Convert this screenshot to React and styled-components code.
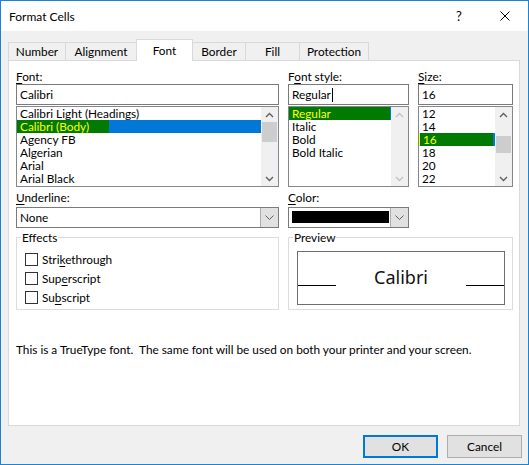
import React from "react";
import styled, { createGlobalStyle } from "styled-components";

const Global = createGlobalStyle`
  html, body { margin: 0; padding: 0; background: #ffffff; }
  body {
    font-family: Lato, "Noto Sans", sans-serif;
    font-size: 11.8px;
    color: #000;
  }
  * { box-sizing: border-box; }
`;

const Window = styled.div`
  width: 529px;
  height: 465px;
  border: 1px solid #1883d7;
  background: #f0f0f0;
  display: flex;
  flex-direction: column;
`;

const TitleBar = styled.div`
  height: 30px;
  flex: none;
  background: #fff;
  display: flex;
  align-items: center;
  padding-left: 8px;
`;

const Title = styled.div`
  flex: 1;
  line-height: 15px;
  font-size: 12px;
`;

const CaptionButton = styled.div`
  width: 46px;
  height: 30px;
  display: flex;
  align-items: center;
  justify-content: center;
  font-size: 13px;
`;

const Body = styled.div`
  flex: 1;
  display: flex;
  flex-direction: column;
  padding: 8px 6px 6px 7px;
`;

const TabStrip = styled.div`
  display: flex;
  align-items: flex-end;
  height: 21px;
`;

const Tab = styled.div`
  width: ${(p) => p.$w}px;
  height: ${(p) => (p.$active ? 22 : 18)}px;
  margin-right: -1px;
  margin-bottom: ${(p) => (p.$active ? -1 : 0)}px;
  border: 1px solid #d9d9d9;
  border-bottom: none;
  background: ${(p) => (p.$active ? "#fff" : "#f0f0f0")};
  position: relative;
  z-index: ${(p) => (p.$active ? 2 : 0)};
  display: flex;
  align-items: center;
  justify-content: center;
  line-height: 15px;
`;

const Panel = styled.div`
  height: 366px;
  margin-right: 2px;
  background: #fff;
  border: 1px solid #d9d9d9;
  padding: 8px 6px 0 7px;
  position: relative;
  z-index: 1;
`;

const TopGrid = styled.div`
  display: grid;
  grid-template-columns: 263px 121px 95px;
  column-gap: 9px;
`;

const MidGrid = styled.div`
  display: grid;
  grid-template-columns: 263px 121px;
  column-gap: 9px;
  margin-top: 3px;
`;

const Field = styled.div`
  display: flex;
  flex-direction: column;
`;

const Label = styled.div`
  height: 15px;
  line-height: 15px;
  margin-bottom: ${(p) => p.$gap || 0}px;
  white-space: nowrap;
`;

const Key = styled.span`
  text-decoration: underline;
  text-underline-offset: 2px;
`;

const TextBox = styled.div`
  height: 21px;
  border: 1px solid #7a7a7a;
  padding: 0 3px;
  display: flex;
  align-items: center;
  line-height: 15px;
  background: #fff;
`;

const Caret = styled.span`
  display: inline-block;
  width: 1px;
  height: 14px;
  background: #000;
  margin-left: 1px;
`;

const ListBox = styled.div`
  margin-top: 1px;
  height: 81px;
  border: 1px solid #828790;
  display: flex;
  background: #fff;
`;

const Items = styled.div`
  flex: 1;
  overflow: hidden;
`;

const Item = styled.div`
  height: 13px;
  line-height: 13px;
  padding-left: 3px;
  white-space: nowrap;
  background: ${(p) => p.$bg || "transparent"};
  color: ${(p) => p.$fg || "#000"};
  border-left: ${(p) => (p.$edgeLeft ? `1px solid ${p.$edgeLeft}` : "none")};
  border-right: ${(p) => (p.$edgeRight ? `${p.$edgeRight}px solid #0078d7` : "none")};
`;

const Mark = styled.div`
  width: 92px;
  height: 13px;
  margin-left: -3px;
  padding-left: 3px;
  background: #007a00;
  color: #ffff00;
`;

const ScrollBar = styled.div`
  width: 17px;
  flex: none;
  background: #f0f0f0;
  display: flex;
  flex-direction: column;
`;

const ArrowButton = styled.div`
  height: 15px;
  flex: none;
  display: flex;
  align-items: center;
  justify-content: center;
  color: ${(p) => (p.$disabled ? "#c2c2c2" : "#606060")};
`;

const Track = styled.div`
  flex: 1;
`;

const Thumb = styled.div`
  margin: ${(p) => p.$top}px 1px 0;
  height: ${(p) => p.$h}px;
  background: #cdcdcd;
`;

const ComboBox = styled.div`
  height: 21px;
  border: 1px solid #7a7a7a;
  display: flex;
  background: #fff;
`;

const ComboValue = styled.div`
  flex: 1;
  padding: 0 3px;
  display: flex;
  align-items: center;
  line-height: 15px;
`;

const Swatch = styled.div`
  flex: 1;
  margin: 3px 1px 4px 3px;
  background: #000;
`;

const DropButton = styled.div`
  width: 18px;
  flex: none;
  background: #e1e1e1;
  border-left: 1px solid #acacac;
  display: flex;
  align-items: center;
  justify-content: center;
  color: #606060;
`;

const GroupGrid = styled.div`
  display: grid;
  grid-template-columns: 263px 225px;
  column-gap: 9px;
  margin-top: 2px;
`;

const Group = styled.fieldset`
  margin: 0;
  padding: 0;
  min-width: 0;
  border: 1px solid #dcdcdc;
`;

const Legend = styled.legend`
  margin-left: 4px;
  padding: 0 1px;
  line-height: 15px;
  font-size: 11.8px;
`;

const CheckList = styled.div`
  padding: 5px 0 2px 8px;
  display: flex;
  flex-direction: column;
`;

const CheckRow = styled.div`
  height: 19px;
  display: flex;
  align-items: center;
  gap: 4px;
  line-height: 15px;
`;

const CheckBox = styled.span`
  width: 13px;
  height: 13px;
  border: 1px solid #333;
  background: #fff;
  flex: none;
`;

const PreviewBox = styled.div`
  height: 54px;
  margin: 6px 7px 0 8px;
  border: 1px solid #6e6e6e;
  display: flex;
  padding-top: 13px;
`;

const PreviewRule = styled.div`
  flex: 1;
  height: 1px;
  margin-top: 20px;
  background: #000;
`;

const PreviewText = styled.div`
  margin: 0 38px;
  font-family: "Noto Sans", sans-serif;
  font-size: 18px;
  line-height: 24px;
  color: #111;
`;

const Info = styled.div`
  margin-top: 32px;
  line-height: 15px;
  white-space: pre;
`;

const ButtonRow = styled.div`
  margin-top: 9px;
  display: flex;
  justify-content: flex-end;
  gap: 9px;
`;

const Button = styled.div`
  width: 75px;
  height: 23px;
  background: #e1e1e1;
  border: ${(p) => (p.$default ? "2px solid #0078d7" : "1px solid #adadad")};
  display: flex;
  align-items: center;
  justify-content: center;
  line-height: 15px;
`;

const ChevronUp = () => (
  <svg width="9" height="6" viewBox="0 0 9 6">
    <polyline points="1,5 4.5,1.5 8,5" fill="none" stroke="currentColor" strokeWidth="1.4" />
  </svg>
);

const ChevronDown = () => (
  <svg width="9" height="6" viewBox="0 0 9 6">
    <polyline points="1,1 4.5,4.5 8,1" fill="none" stroke="currentColor" strokeWidth="1.4" />
  </svg>
);

const ThinChevron = () => (
  <svg width="9" height="5" viewBox="0 0 9 5">
    <polyline points="0.5,0.5 4.5,4.5 8.5,0.5" fill="none" stroke="currentColor" strokeWidth="1" />
  </svg>
);

const CloseGlyph = () => (
  <svg width="10" height="10" viewBox="0 0 10 10">
    <path d="M0.5 0.5 L9.5 9.5 M9.5 0.5 L0.5 9.5" stroke="#000" strokeWidth="1" />
  </svg>
);

const Scroll = ({ disabled, thumbTop, thumbHeight }) => (
  <ScrollBar>
    <ArrowButton $disabled={disabled}>
      <ChevronUp />
    </ArrowButton>
    <Track>{!disabled && <Thumb $top={thumbTop} $h={thumbHeight} />}</Track>
    <ArrowButton $disabled={disabled}>
      <ChevronDown />
    </ArrowButton>
  </ScrollBar>
);

const tabs = [
  { name: "Number", w: 58 },
  { name: "Alignment", w: 72 },
  { name: "Font", w: 57, active: true },
  { name: "Border", w: 54 },
  { name: "Fill", w: 55 },
  { name: "Protection", w: 70 },
];

const fonts = ["Calibri Light (Headings)", "Calibri (Body)", "Agency FB", "Algerian", "Arial", "Arial Black"];
const styles = ["Regular", "Italic", "Bold", "Bold Italic"];
const sizes = ["12", "14", "16", "18", "20", "22"];

export default function App() {
  return (
    <>
      <Global />
      <Window>
        <TitleBar>
          <Title>Format Cells</Title>
          <CaptionButton>?</CaptionButton>
          <CaptionButton>
            <CloseGlyph />
          </CaptionButton>
        </TitleBar>
        <Body>
          <TabStrip>
            {tabs.map((t) => (
              <Tab key={t.name} $w={t.w} $active={t.active}>
                {t.name}
              </Tab>
            ))}
          </TabStrip>
          <Panel>
            <TopGrid>
              <Field>
                <Label>
                  <Key>F</Key>ont:
                </Label>
                <TextBox>Calibri</TextBox>
                <ListBox>
                  <Items>
                    {fonts.map((f) =>
                      f === "Calibri (Body)" ? (
                        <Item key={f} $bg="#0078d7">
                          <Mark>{f}</Mark>
                        </Item>
                      ) : (
                        <Item key={f}>{f}</Item>
                      )
                    )}
                  </Items>
                  <Scroll thumbTop={0} thumbHeight={20} />
                </ListBox>
              </Field>
              <Field>
                <Label>
                  F<Key>o</Key>nt style:
                </Label>
                <TextBox>
                  Regular
                  <Caret />
                </TextBox>
                <ListBox>
                  <Items>
                    {styles.map((s) =>
                      s === "Regular" ? (
                        <Item key={s} $bg="#007a00" $fg="#ffff00" $edgeRight={1}>
                          {s}
                        </Item>
                      ) : (
                        <Item key={s}>{s}</Item>
                      )
                    )}
                  </Items>
                  <Scroll disabled />
                </ListBox>
              </Field>
              <Field>
                <Label>
                  <Key>S</Key>ize:
                </Label>
                <TextBox>16</TextBox>
                <ListBox>
                  <Items>
                    {sizes.map((s) =>
                      s === "16" ? (
                        <Item key={s} $bg="#007a00" $fg="#ffff00" $edgeLeft="#ffff00" $edgeRight={2}>
                          {s}
                        </Item>
                      ) : (
                        <Item key={s}>{s}</Item>
                      )
                    )}
                  </Items>
                  <Scroll thumbTop={14} thumbHeight={17} />
                </ListBox>
              </Field>
            </TopGrid>

            <MidGrid>
              <Field>
                <Label $gap={2}>
                  <Key>U</Key>nderline:
                </Label>
                <ComboBox>
                  <ComboValue>None</ComboValue>
                  <DropButton>
                    <ThinChevron />
                  </DropButton>
                </ComboBox>
              </Field>
              <Field>
                <Label $gap={2}>
                  <Key>C</Key>olor:
                </Label>
                <ComboBox>
                  <Swatch />
                  <DropButton>
                    <ThinChevron />
                  </DropButton>
                </ComboBox>
              </Field>
            </MidGrid>

            <GroupGrid>
              <Group>
                <Legend>Effects</Legend>
                <CheckList>
                  <CheckRow>
                    <CheckBox />
                    <span>
                      Stri<Key>k</Key>ethrough
                    </span>
                  </CheckRow>
                  <CheckRow>
                    <CheckBox />
                    <span>
                      Sup<Key>e</Key>rscript
                    </span>
                  </CheckRow>
                  <CheckRow>
                    <CheckBox />
                    <span>
                      Su<Key>b</Key>script
                    </span>
                  </CheckRow>
                </CheckList>
              </Group>
              <Group>
                <Legend>Preview</Legend>
                <PreviewBox>
                  <PreviewRule />
                  <PreviewText>Calibri</PreviewText>
                  <PreviewRule />
                </PreviewBox>
              </Group>
            </GroupGrid>

            <Info>This is a TrueType font.  The same font will be used on both your printer and your screen.</Info>
          </Panel>
          <ButtonRow>
            <Button $default>OK</Button>
            <Button>Cancel</Button>
          </ButtonRow>
        </Body>
      </Window>
    </>
  );
}
